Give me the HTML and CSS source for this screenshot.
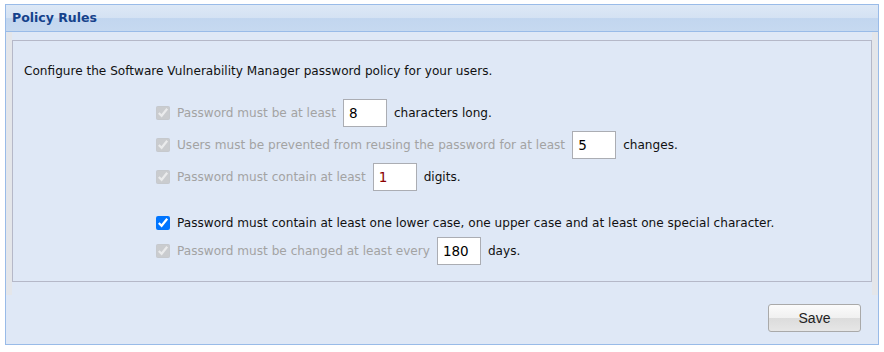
FILE: index.html
```
<!DOCTYPE html>
<html>
<head>
<meta charset="utf-8">
<link rel="stylesheet" href="styles.css">
</head>
<body>
<div class="panel">
  <div class="panel-header">Policy Rules</div>
  <div class="panel-body">
    <div class="scroller">
      <div class="fieldset">
        <div class="intro">Configure the Software Vulnerability Manager password policy for your users.</div>
        <div class="rules">
          <label class="row disabled">
            <input type="checkbox" checked disabled>
            <span class="lbl">Password must be at least</span>
            <input type="text" class="num" value="8">
            <span class="after">characters long.</span>
          </label>
          <label class="row disabled">
            <input type="checkbox" checked disabled>
            <span class="lbl">Users must be prevented from reusing the password for at least</span>
            <input type="text" class="num" value="5">
            <span class="after">changes.</span>
          </label>
          <label class="row disabled">
            <input type="checkbox" checked disabled>
            <span class="lbl">Password must contain at least</span>
            <input type="text" class="num red" value="1">
            <span class="after">digits.</span>
          </label>
          <label class="row short spaced">
            <input type="checkbox" checked>
            <span class="lbl">Password must contain at least one lower case, one upper case and at least one special character.</span>
          </label>
          <label class="row disabled">
            <input type="checkbox" checked disabled>
            <span class="lbl">Password must be changed at least every</span>
            <input type="text" class="num" value="180">
            <span class="after">days.</span>
          </label>
        </div>
      </div>
    </div>
    <div class="footer">
      <button class="btn" type="button">Save</button>
    </div>
  </div>
</div>
</body>
</html>
```
FILE: styles.css
```
html, body {
  margin: 0;
  padding: 0;
  background: #ffffff;
}
body {
  font-family: "DejaVu Sans", Verdana, sans-serif;
  font-size: 12.1px;
  color: #000;
}
.panel {
  margin: 4px 0 0 5px;
  width: 874px;
  height: 341px;
  box-sizing: border-box;
  border: 1px solid #99bbe8;
  background: #dfe8f6;
  display: flex;
  flex-direction: column;
}
.panel-header {
  height: 27px;
  box-sizing: border-box;
  border-bottom: 1px solid #99bbe8;
  background: linear-gradient(#dde8f6 0, #d4e2f3 50%, #c2d6ef 52%, #c6d9f0 100%);
  color: #15428b;
  font-weight: bold;
  font-size: 12.5px;
  line-height: 26px;
  padding-left: 6px;
}
.panel-body {
  flex: 1;
  display: flex;
  flex-direction: column;
}
.scroller {
  border-left: 6px solid #e4e6ea;
  border-right: 6px solid #e4e6ea;
  padding: 8px 0 13px 0;
}
.fieldset {
  border: 1px solid #b5b8c8;
  padding: 22px 0 14px 11px;
}
.intro {
  line-height: 16px;
  color: #111;
}
.rules {
  margin-top: 18px;
  padding-left: 132px;
}
.row {
  display: flex;
  align-items: center;
  height: 32px;
}
.row.short {
  height: 24px;
}
.row.spaced {
  margin-top: 18px;
}
.row input[type=checkbox] {
  margin: 0 7px 0 0;
  width: 14px;
  height: 14px;
}
.row.disabled .lbl {
  color: #a3a3a3;
}
.lbl {
  color: #111;
}
.num {
  width: 44px;
  height: 28px;
  box-sizing: border-box;
  border: 1px solid #abadb3;
  background: #fff;
  font-family: "DejaVu Sans", Verdana, sans-serif;
  font-size: 13.5px;
  color: #000;
  padding: 0 0 0 5px;
  margin: 0 7px 0 7px;
  outline: none;
}
.num.red {
  color: #8b0000;
}
.after {
  color: #111;
}
.footer {
  flex: 1;
  display: flex;
  justify-content: flex-end;
  align-items: flex-start;
  padding: 9px 17px 0 0;
}
.btn {
  width: 93px;
  height: 28px;
  border: 1px solid #a9a9a9;
  border-radius: 3px;
  background: linear-gradient(#fbfbfb 0, #f0f0f0 50%, #dcdcdc 52%, #e6e6e6 100%);
  font-family: "Liberation Sans", Arial, sans-serif;
  font-size: 14px;
  color: #222;
  padding: 0;
}
```
